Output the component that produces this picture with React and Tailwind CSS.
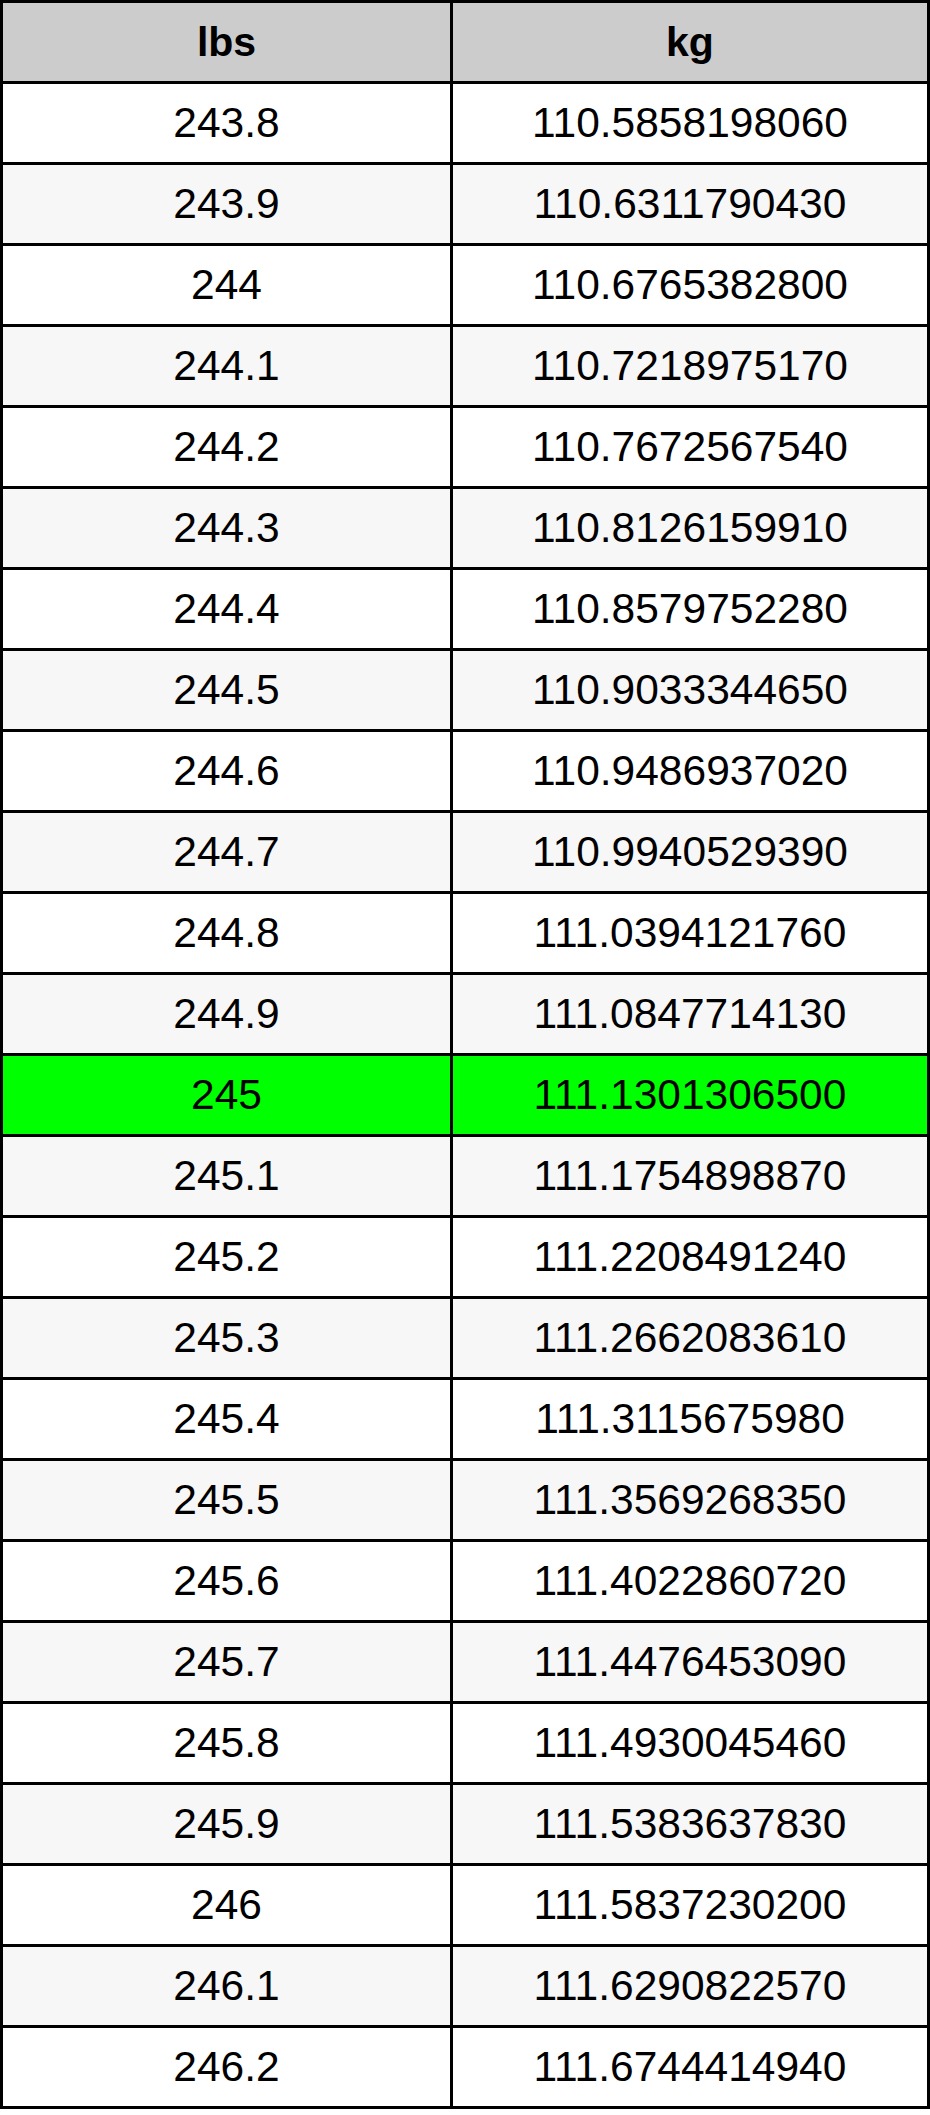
const rows = [
  ['243.8', '110.5858198060'],
  ['243.9', '110.6311790430'],
  ['244', '110.6765382800'],
  ['244.1', '110.7218975170'],
  ['244.2', '110.7672567540'],
  ['244.3', '110.8126159910'],
  ['244.4', '110.8579752280'],
  ['244.5', '110.9033344650'],
  ['244.6', '110.9486937020'],
  ['244.7', '110.9940529390'],
  ['244.8', '111.0394121760'],
  ['244.9', '111.0847714130'],
  ['245', '111.1301306500'],
  ['245.1', '111.1754898870'],
  ['245.2', '111.2208491240'],
  ['245.3', '111.2662083610'],
  ['245.4', '111.3115675980'],
  ['245.5', '111.3569268350'],
  ['245.6', '111.4022860720'],
  ['245.7', '111.4476453090'],
  ['245.8', '111.4930045460'],
  ['245.9', '111.5383637830'],
  ['246', '111.5837230200'],
  ['246.1', '111.6290822570'],
  ['246.2', '111.6744414940'],
]

const rowBg = (i, lbs) => {
  if (lbs === '245') return 'bg-[#00ff00]'
  return i % 2 === 0 ? 'bg-white' : 'bg-[#f7f7f7]'
}

const App = () => {
  return (
    <div className="bg-white font-['Liberation_Sans',Arial,sans-serif] text-black">
      <div className="grid w-[930px] grid-cols-[447px_474px] gap-[3px] border-[3px] border-black bg-black leading-none">
        {/* Header */}
        <div className="flex h-[78px] items-center justify-center bg-[#cccccc] text-[41px] font-bold">lbs</div>
        <div className="flex h-[78px] items-center justify-center bg-[#cccccc] text-[41px] font-bold">kg</div>

        {rows.map(([lbs, kg], i) => (
          <div key={lbs} className="contents">
            <div className={`flex h-[78px] items-center justify-center text-[42.5px] ${rowBg(i, lbs)}`}>{lbs}</div>
            <div className={`flex h-[78px] items-center justify-center text-[42.5px] ${rowBg(i, lbs)}`}>{kg}</div>
          </div>
        ))}
      </div>
    </div>
  )
}

export default App
